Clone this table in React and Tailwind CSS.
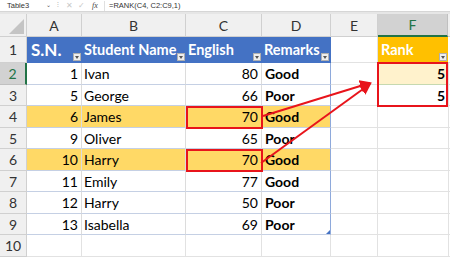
import React from "react";

const colW = ["w-[27px]", "w-[55px]", "w-[104px]", "w-[76px]", "w-[69px]", "w-[47px]", "w-[70px]", "w-[2px]"];
const rowH = ["h-[26px]", "h-[22px]", "h-[21px]", "h-[22px]", "h-[21px]", "h-[22px]", "h-[21px]", "h-[22px]", "h-[21px]", "h-[22px]"];

const data = [
  ["1", "Ivan", "80", "Good"],
  ["5", "George", "66", "Poor"],
  ["6", "James", "70", "Good"],
  ["9", "Oliver", "65", "Poor"],
  ["10", "Harry", "70", "Good"],
  ["11", "Emily", "77", "Good"],
  ["12", "Harry", "50", "Poor"],
  ["13", "Isabella", "69", "Poor"],
];

function Filter() {
  return (
    <div className="absolute right-[1px] bottom-[1px] w-[8px] h-[8px] bg-[#eeeeee] border border-[#b0b0b0] flex items-center justify-center">
      <div className="w-0 h-0 border-l-[2px] border-r-[2px] border-t-[3px] border-l-transparent border-r-transparent border-t-[#555]" />
    </div>
  );
}

export default function App() {
  const headers = ["A", "B", "C", "D", "E", "F"];
  return (
    <div className="relative w-[450px] h-[257px] overflow-hidden bg-white font-['Lato',sans-serif] text-black">
      {/* formula bar */}
      <div className="h-[12px] flex items-center border-b border-[#d6d6d6] text-[7.5px] text-[#333] font-['Liberation_Sans',sans-serif]">
        <div className="w-[53px] flex items-center justify-between pl-[7px] pr-[2px]">
          <span>Table3</span>
          <span className="text-[6px] text-[#555]">⌄</span>
        </div>
        <span className="w-[10px] text-center text-[#aaa] text-[7px]">⁝</span>
        <span className="w-[12px] text-center text-[#c8c8c8] text-[8px]">✕</span>
        <span className="w-[12px] text-center text-[#c8c8c8] text-[8px]">✓</span>
        <span className="w-[16px] text-center italic font-['Liberation_Serif',serif] text-[8px] text-[#444]">fx</span>
        <div className="h-[10px] w-px bg-[#e0e0e0] ml-[1px]" />
        <span className="ml-[4px]">=RANK(C4, C2:C9,1)</span>
      </div>
      <div className="h-[2px] bg-[#e6e6e6]" />

      {/* column headers */}
      <div className="flex h-[23px]">
        <div className={`${colW[0]} relative bg-[#f0f0f0] border-r border-b border-[#d0d0d0]`}>
          <svg className="absolute right-[2px] bottom-[2px]" width="15" height="15" viewBox="0 0 15 15">
            <polygon points="15,0 15,15 0,15" fill="#c4c4c4" />
          </svg>
        </div>
        {headers.map((h, i) => (
          <div
            key={h}
            className={`${colW[i + 1]} flex items-center justify-center text-[14px] border-r ${
              h === "F"
                ? "bg-[#d2d2d2] text-[#217346] border-b-2 border-b-[#217346] border-r-[#c0c0c0]"
                : "bg-[#f0f0f0] text-[#333] border-b border-[#d0d0d0]"
            }`}
          >
            {h}
          </div>
        ))}
        <div className={`${colW[7]} bg-[#f0f0f0] border-b border-[#d0d0d0]`} />
      </div>

      {/* rows */}
      {Array.from({ length: 10 }).map((_, r) => {
        const rowNum = r + 1;
        const h = rowH[r];
        const isHeader = rowNum === 1;
        const d = rowNum >= 2 && rowNum <= 9 ? data[rowNum - 2] : null;
        const hl = rowNum === 4 || rowNum === 6;
        const tableBg = hl ? "bg-[#ffd966]" : "bg-white";
        const tableBorder = "border-b border-[#c5d0e4]";
        const inTable = rowNum <= 9;
        return (
          <div key={r} className={`flex ${h}`}>
            <div
              className={`${colW[0]} flex items-center justify-center text-[14px] border-b ${
                rowNum === 2
                  ? "bg-[#d2d2d2] text-[#217346] border-r-2 border-r-[#217346] border-b-[#c0c0c0]"
                  : "bg-[#f0f0f0] text-[#333] border-r border-[#d0d0d0]"
              }`}
            >
              {rowNum}
            </div>
            {isHeader ? (
              <>
                <div className={`${colW[1]} relative bg-[#4472c4] text-white font-bold text-[17px] flex items-center pl-[4px] border-b border-[#4472c4]`}>
                  S.N.
                  <Filter />
                </div>
                <div className={`${colW[2]} relative bg-[#4472c4] text-white font-bold text-[14.5px] flex items-center pl-[2px] border-b border-[#4472c4]`}>
                  Student Name
                  <Filter />
                </div>
                <div className={`${colW[3]} relative bg-[#4472c4] text-white font-bold text-[14.5px] flex items-center pl-[2px] border-b border-[#4472c4]`}>
                  English
                  <Filter />
                </div>
                <div className={`${colW[4]} relative bg-[#4472c4] text-white font-bold text-[14.5px] flex items-center pl-[2px] border-b border-r border-[#4472c4]`}>
                  Remarks
                  <Filter />
                </div>
                <div className={`${colW[5]} bg-white border-r border-b border-[#e2e2e2]`} />
                <div className={`${colW[6]} relative bg-[#ffc000] text-white font-bold text-[14.5px] flex items-center pl-[3px] border-b border-[#ffc000]`}>
                  Rank
                  <Filter />
                </div>
                <div className={`${colW[7]} border-b border-[#e2e2e2]`} />
              </>
            ) : (
              <>
                {inTable ? (
                  <>
                    <div className={`${colW[1]} ${tableBg} ${tableBorder} border-r border-r-[#dcdcdc] flex items-center justify-end pr-[3px] text-[14px]`}>
                      {d[0]}
                    </div>
                    <div className={`${colW[2]} ${tableBg} ${tableBorder} border-r border-r-[#dcdcdc] flex items-center pl-[2px] text-[14px]`}>
                      {d[1]}
                    </div>
                    <div className={`${colW[3]} ${tableBg} ${tableBorder} border-r border-r-[#dcdcdc] flex items-center justify-end pr-[3px] text-[14px]`}>
                      {d[2]}
                    </div>
                    <div className={`${colW[4]} relative ${tableBg} ${tableBorder} border-r border-r-[#8ea9db] flex items-center pl-[3px] text-[14px] font-bold`}>
                      {d[3]}
                      {rowNum === 9 && (
                        <svg className="absolute right-0 bottom-0" width="4" height="4" viewBox="0 0 4 4">
                          <polygon points="4,0 4,4 0,4" fill="#4472c4" />
                        </svg>
                      )}
                    </div>
                  </>
                ) : (
                  <>
                    <div className={`${colW[1]} border-r border-b border-[#e2e2e2]`} />
                    <div className={`${colW[2]} border-r border-b border-[#e2e2e2]`} />
                    <div className={`${colW[3]} border-r border-b border-[#e2e2e2]`} />
                    <div className={`${colW[4]} border-r border-b border-[#e2e2e2]`} />
                  </>
                )}
                <div className={`${colW[5]} border-r border-b border-[#e2e2e2]`} />
                <div
                  className={`${colW[6]} flex items-center justify-end pr-[3px] text-[14px] font-bold border-b ${
                    rowNum === 2 ? "bg-[#fff2cc] border-[#c6d9b0]" : "border-[#e2e2e2]"
                  }`}
                >
                  {rowNum === 2 || rowNum === 3 ? "5" : ""}
                </div>
                <div className={`${colW[7]} border-l border-b border-[#e2e2e2]`} />
              </>
            )}
          </div>
        );
      })}

      {/* red highlight boxes */}
      <div className="absolute left-[186px] top-[106px] w-[77px] h-[23px] border-2 border-[#e8141b]" />
      <div className="absolute left-[186px] top-[149px] w-[77px] h-[23px] border-2 border-[#e8141b]" />
      <div className="absolute left-[377px] top-[62px] w-[71px] h-[45px] border-2 border-[#e8141b]" />

      {/* arrows */}
      <svg className="absolute left-0 top-0" width="450" height="257" viewBox="0 0 450 257">
        <defs>
          <marker id="ah" markerWidth="6" markerHeight="6" refX="5" refY="3" orient="auto" markerUnits="strokeWidth">
            <path d="M0,0 L6,3 L0,6 Z" fill="#e8141b" />
          </marker>
        </defs>
        <line x1="263" y1="116" x2="370" y2="83" stroke="#e8141b" strokeWidth="2" markerEnd="url(#ah)" />
        <line x1="261" y1="163" x2="370" y2="84" stroke="#e8141b" strokeWidth="2" markerEnd="url(#ah)" />
      </svg>
    </div>
  );
}
